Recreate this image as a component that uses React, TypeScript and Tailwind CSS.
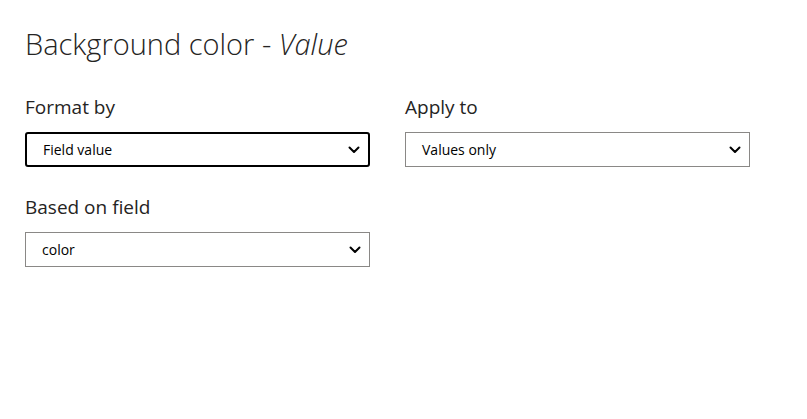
import React from "react";

const Chevron: React.FC = () => (
  <svg width="12" height="8" viewBox="0 0 12 8" className="shrink-0">
    <polyline points="1.5,1.5 6,6 10.5,1.5" fill="none" stroke="#000" strokeWidth="2" strokeLinecap="round" strokeLinejoin="round" />
  </svg>
);

interface FieldProps {
  label: string;
  value: string;
  focused?: boolean;
}

const Field: React.FC<FieldProps> = ({ label, value, focused = false }) => {
  return (
    <div className="w-[345px]">
      <div className="text-[19px] leading-[22px] text-[#252423]">{label}</div>
      <div
        className={`mt-[14px] flex h-[35px] items-center justify-between pl-[16px] pr-[8px] text-[14px] text-[#000] ${
          focused ? "rounded-[3px] border-2 border-black pl-[15px] pr-[7px]" : "border border-[#8a8886]"
        }`}
      >
        <span>{value}</span>
        <Chevron />
      </div>
    </div>
  );
};

const App: React.FC = () => {
  return (
    <div
      className="h-[419px] w-[807px] bg-white pl-[25px] pt-[25px]"
      style={{ fontFamily: '"Open Sans", "Noto Sans", sans-serif' }}
    >
      <h1 className="text-[29px] font-light leading-[38px] text-[#252423]">
        Background color - <i className="font-light">Value</i>
      </h1>

      <div className="mt-[33px] flex gap-[35px]">
        <Field label="Format by" value="Field value" focused />
        <Field label="Apply to" value="Values only" />
      </div>

      <div className="mt-[29px]">
        <Field label="Based on field" value="color" />
      </div>
    </div>
  );
};

export default App;
